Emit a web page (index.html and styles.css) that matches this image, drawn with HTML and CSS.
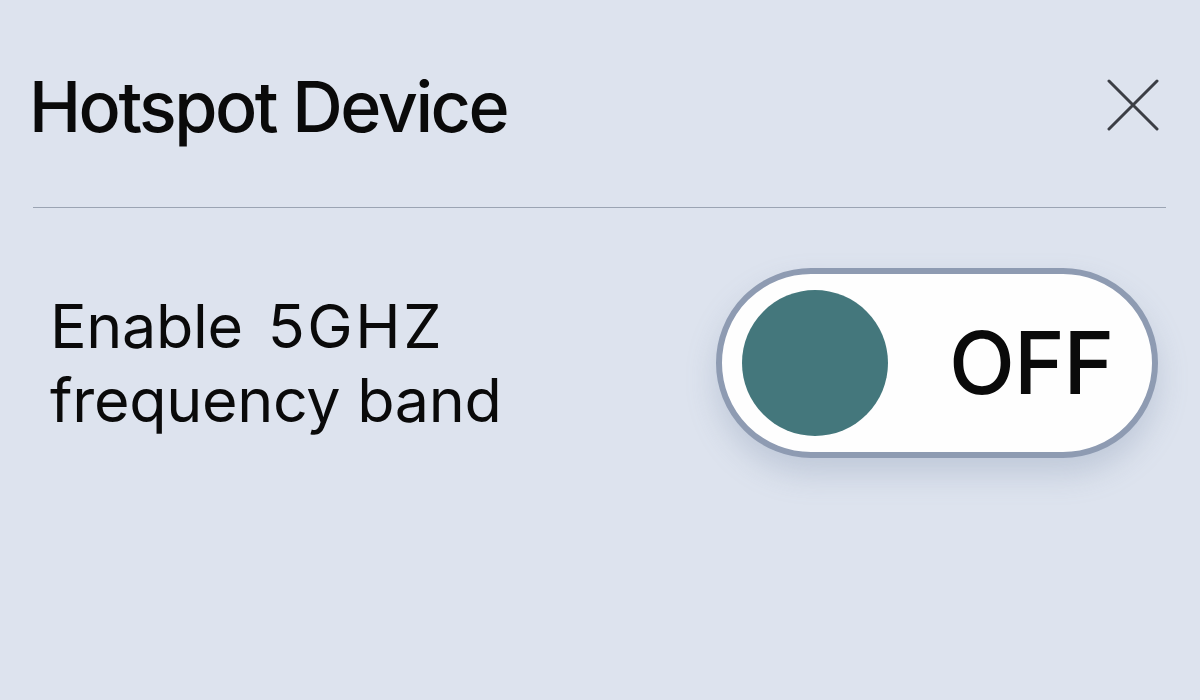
FILE: index.html
```html
<!DOCTYPE html>
<html>
<head>
<meta charset="utf-8">
<link rel="stylesheet" href="styles.css">
</head>
<body>
<div class="sheet">
  <header class="header">
    <h1 class="title">Hotspot Device</h1>
    <button class="close" aria-label="Close">
      <svg width="52" height="52" viewBox="0 0 52 52"><path d="M2 2 L50 50 M50 2 L2 50" stroke="#3b3e45" stroke-width="3" stroke-linecap="round" fill="none"/></svg>
    </button>
  </header>
  <hr class="divider">
  <section class="row">
    <div class="label">Enable <span class="band">5GHZ</span><br>frequency band</div>
    <div class="toggle">
      <span class="knob"></span>
      <span class="state">OFF</span>
    </div>
  </section>
</div>
</body>
</html>
```
FILE: styles.css
```css
html, body {
  margin: 0;
  padding: 0;
  background: #dde3ee;
  font-family: Inter, "Noto Sans", sans-serif;
  color: #0a0a0a;
}
.sheet {
  width: 1200px;
  height: 700px;
  box-sizing: border-box;
}
.header {
  display: flex;
  justify-content: space-between;
  align-items: flex-start;
  height: 207px;
  padding: 72px 41px 0 29px;
  box-sizing: border-box;
}
.title {
  margin: 0;
  font-size: 70px;
  font-weight: 500;
  letter-spacing: -2.5px;
  line-height: 1;
}
.close {
  background: none;
  border: 0;
  padding: 0;
  width: 52px;
  height: 52px;
  margin-top: 7px;
}
.close svg {
  display: block;
}
.divider {
  margin: 0 34px 0 33px;
  border: 0;
  height: 1px;
  background: #9ba4b3;
}
.row {
  display: flex;
  justify-content: space-between;
  align-items: center;
  padding: 60px 42px 0 50px;
}
.label {
  font-size: 61px;
  line-height: 74px;
  font-weight: 400;
  letter-spacing: -0.3px;
}
.band {
  margin-left: 8px;
  letter-spacing: 2.5px;
}
.toggle {
  width: 442px;
  height: 190px;
  box-sizing: border-box;
  border: 6px solid #8e9bb2;
  border-radius: 95px;
  background: #fefefe;
  display: flex;
  align-items: center;
  padding-left: 20px;
  box-shadow: 0 16px 30px rgba(120, 135, 165, 0.28);
}
.knob {
  width: 146px;
  height: 146px;
  border-radius: 50%;
  background: #44777c;
  flex: none;
}
.state {
  margin-left: 61px;
  font-size: 86px;
  font-weight: 500;
  line-height: 1;
  letter-spacing: -1px;
}
```
